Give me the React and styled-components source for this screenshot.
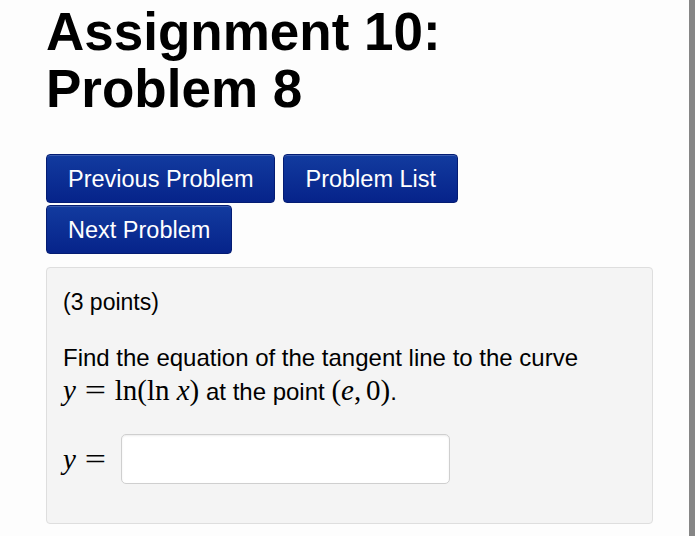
import styled, { createGlobalStyle } from "styled-components";

const GlobalStyle = createGlobalStyle`
  html, body {
    margin: 0;
    padding: 0;
    background: #ffffff;
  }
  body {
    font-family: "Liberation Sans", Arial, Helvetica, sans-serif;
    color: #000;
  }
`;

const Screen = styled.div`
  display: flex;
  height: 536px;
  overflow: hidden;
`;
const Page = styled.main`
  flex: 1;
  background: #fdfdfd;
  padding: 3px 0 0 46px;
`;
const ScrollBar = styled.div`
  width: 6px;
  background: #868686;
  margin-right: 5px;
`;
const Title = styled.h1`
  margin: 0;
  font-size: 53px;
  line-height: 57px;
  font-weight: 700;
`;
const Nav = styled.nav`
  display: flex;
  flex-wrap: wrap;
  column-gap: 8px;
  row-gap: 2px;
  max-width: 440px;
  margin-top: 37px;
`;
const NavButton = styled.button`
  font-family: "Liberation Sans", Arial, sans-serif;
  font-size: 23.5px;
  height: 49px;
  padding: 2px 21px 0;
  color: #ffffff;
  background: linear-gradient(#123b9f, #06238a);
  border: 1px solid #041c73;
  border-radius: 4px;
  box-shadow: inset 0 1px 0 rgba(255, 255, 255, 0.18);
  cursor: pointer;
`;
const ProblemBox = styled.section`
  width: 607px;
  box-sizing: border-box;
  margin-top: 13px;
  padding: 18px 16px 39px;
  background: #f4f4f4;
  border: 1px solid #dedede;
  border-radius: 4px;
  font-size: 24px;
  line-height: 32px;
`;
const Points = styled.div`
  font-size: 23px;
  margin-bottom: 24px;
`;
const Question = styled.p`
  margin: 0;
`;
const Math = styled.span`
  font-family: "Liberation Serif", "Times New Roman", serif;
  font-size: 29px;
  line-height: 32px;
  font-style: normal;
  white-space: nowrap;
`;
const Var = styled.i`
  font-style: italic;
`;
const Rel = styled.span`
  display: inline-block;
  width: 0.78em;
  margin: 0 0.28em;
  text-align: center;
  transform: scaleX(1.3);
`;
const Thin = styled.span`
  display: inline-block;
  width: ${(props) => props.$w || 0.17}em;
`;
const AnswerRow = styled.div`
  display: flex;
  align-items: center;
  gap: 6px;
  margin-top: 26px;
`;
const AnswerInput = styled.input`
  width: 329px;
  height: 50px;
  box-sizing: border-box;
  background: #ffffff;
  border: 1px solid #cfcfcf;
  border-radius: 5px;
  box-shadow: inset 0 1px 2px rgba(0, 0, 0, 0.08);
  font-size: 20px;
  padding: 0 10px;
`;

export default function App() {
  return (
    <>
      <GlobalStyle />
      <Screen>
        <Page>
          <Title>
            Assignment 10:
            <br />
            Problem 8
          </Title>
          <Nav>
            <NavButton>Previous Problem</NavButton>
            <NavButton>Problem List</NavButton>
            <NavButton>Next Problem</NavButton>
          </Nav>
          <ProblemBox>
            <Points>(3 points)</Points>
            <Question>
              Find the equation of the tangent line to the curve
              <br />
              <Math>
                <Var>y</Var>
                <Rel>=</Rel>ln(ln<Thin $w={0.25} />
                <Var>x</Var>)
              </Math>{" "}
              at the point{" "}
              <Math>
                (<Var>e</Var>,<Thin />0)
              </Math>
              .
            </Question>
            <AnswerRow>
              <Math>
                <Var>y</Var>
                <Rel>=</Rel>
              </Math>
              <AnswerInput type="text" aria-label="answer" />
            </AnswerRow>
          </ProblemBox>
        </Page>
        <ScrollBar />
      </Screen>
    </>
  );
}
